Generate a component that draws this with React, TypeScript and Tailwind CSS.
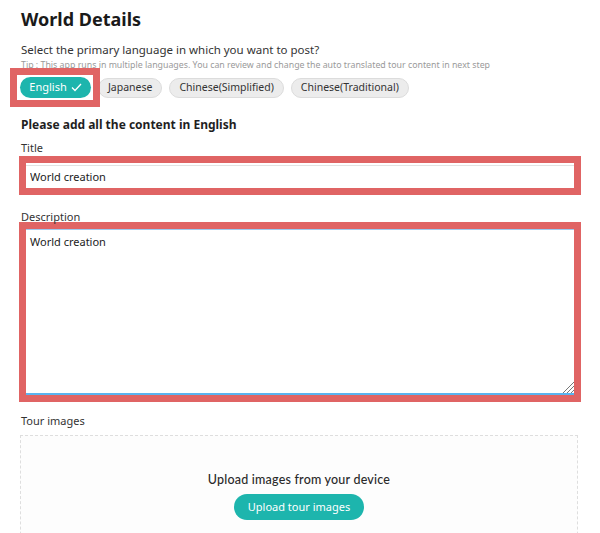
import React from 'react';

const languages = ['English', 'Japanese', 'Chinese(Simplified)', 'Chinese(Traditional)'];

const App: React.FC = () => {
  const selected = 'English';

  return (
    <div className="w-[600px] h-[533px] overflow-hidden bg-white text-[#222] font-['Noto_Sans',sans-serif]">
      <div className="pl-[21px] pr-[20px] pt-[7px]">
        <h1 className="text-[18px] font-bold leading-[24px] text-[#1a1a1a]">World Details</h1>

        <p className="mt-[11px] text-[11.5px] leading-[16px] text-[#333]">
          Select the primary language in which you want to post?
        </p>
        <p className="mt-[1px] text-[8.8px] leading-[12px] text-[#9a9a9a]">
          Tip : This app runs in multiple languages. You can review and change the auto translated tour content in next step
        </p>

        <div className="mt-[6px] flex items-center gap-[7px] -ml-px">
          {languages.map((lang) =>
            lang === selected ? (
              <div key={lang} className="relative">
                <button className="h-[21px] w-[71px] justify-center rounded-full bg-[#1db5ad] text-white text-[11px] flex items-center gap-[4px]">
                  {lang}
                  <svg width="11" height="9" viewBox="0 0 11 9" fill="none">
                    <path d="M1 4.5 L4 7.5 L10 1" stroke="white" strokeWidth="1.3" />
                  </svg>
                </button>
                <div className="absolute left-[-10px] top-[-9px] w-[90px] h-[39px] border-[7px] border-[#e06464]" />
              </div>
            ) : (
              <button
                key={lang}
                className="h-[20px] px-[9px] rounded-full bg-[#ececec] border border-[#dcdcdc] text-[#333] text-[10.5px]"
              >
                {lang}
              </button>
            )
          )}
        </div>

        <h2 className="mt-[18px] text-[12px] font-bold leading-[18px] text-[#1f1f1f]">
          Please add all the content in English
        </h2>

        <label className="block mt-[7px] text-[11px] leading-[14px] text-[#333]">Title</label>
        <div className="-ml-[2px] mt-[1px] w-[562px] border-[7px] border-[#e06464]">
          <input
            readOnly
            value="World creation"
            className="w-full h-[23px] border-t border-[#e2e2e2] px-[4px] text-[11px] text-[#222] outline-none"
          />
        </div>

        <label className="block mt-[15px] text-[11px] leading-[14px] text-[#333]">Description</label>
        <div className="-ml-[2px] mt-[-2px] w-[562px] h-[180px] border-[7px] border-[#e06464]">
          <div className="relative h-full border-t border-[#9dc9ef] border-b-2 border-b-[#5ab4f0]">
            <p className="pl-[4px] pt-[4px] text-[11px] text-[#222]">World creation</p>
            <svg className="absolute right-0 bottom-0" width="12" height="12" viewBox="0 0 12 12">
              <path d="M12 1 L1 12 M12 5 L5 12 M12 9 L9 12" stroke="#777" strokeWidth="1" />
            </svg>
          </div>
        </div>

        <label className="block mt-[12px] text-[11px] leading-[14px] text-[#333]">Tour images</label>
        <div className="mt-[7px] -ml-px w-[558px] h-[120px] border border-dashed border-[#dedede] bg-[#fdfdfd] flex flex-col items-center pt-[35px]">
          <p className="text-[12.5px] text-[#2a2a2a] font-['Lato',sans-serif] font-medium tracking-[0.2px]">
            Upload images from your device
          </p>
          <button className="mt-[5px] h-[26px] px-[14px] rounded-full bg-[#1db5ad] text-white text-[11px]">
            Upload tour images
          </button>
        </div>
      </div>
    </div>
  );
};

export default App;
